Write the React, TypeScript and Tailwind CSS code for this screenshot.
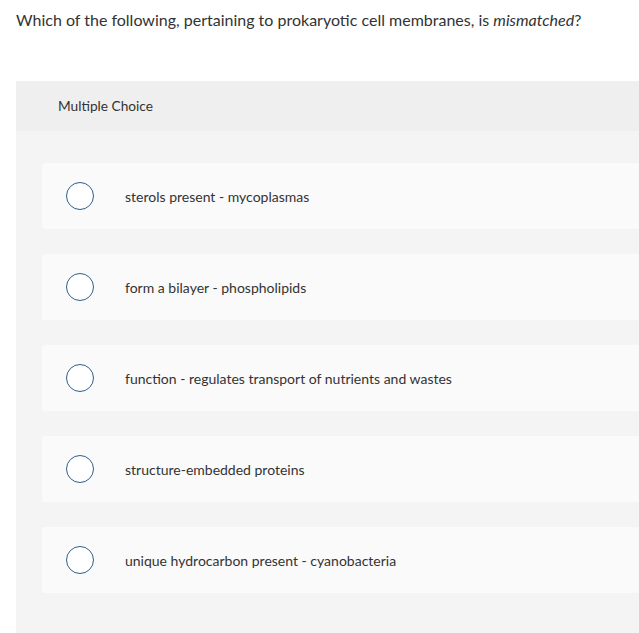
const options = [
  'sterols present - mycoplasmas',
  'form a bilayer - phospholipids',
  'function - regulates transport of nutrients and wastes',
  'structure-embedded proteins',
  'unique hydrocarbon present - cyanobacteria',
];

export default function App() {
  return (
    <div className="min-h-screen bg-white font-['Lato',sans-serif] text-[#333]">
      <div className="px-4 pt-[10px]">
        <p className="text-[16px] leading-[20px]">
          Which of the following, pertaining to prokaryotic cell membranes, is <em>mismatched</em>?
        </p>
      </div>

      <div className="ml-4 mt-[51px] bg-[#f4f4f4] pb-10">
        <div className="flex h-[50px] items-center bg-[#efefef] pl-[42px] pt-[1px] text-[13.7px] text-[#333]">
          Multiple Choice
        </div>

        <div className="flex flex-col gap-[25px] pl-[26px] pt-8">
          {options.map((opt) => (
            <label
              key={opt}
              className="flex h-[66px] cursor-pointer items-center rounded-l-[3px] bg-[#fafafa] pl-6"
            >
              <span className="h-[28px] w-[28px] shrink-0 rounded-full border-[1.5px] border-[#2f5e8e] bg-white" />
              <span className="ml-[31px] text-[14px] text-[#333]">{opt}</span>
            </label>
          ))}
        </div>
      </div>
    </div>
  );
}
